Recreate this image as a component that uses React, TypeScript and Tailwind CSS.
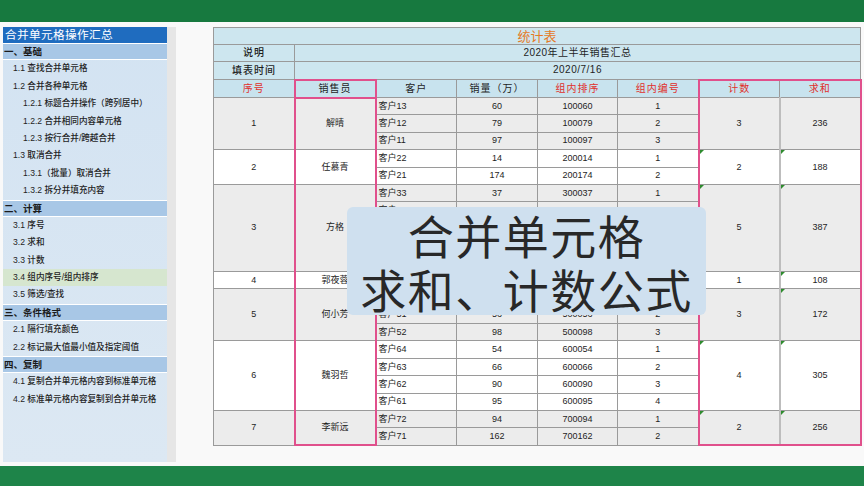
type Row = [string, number, string, number];
type Group = { no: number; name: string; rows: Row[]; count: number; sum: number };

const groups: Group[] = [
  { no: 1, name: "解晴", count: 3, sum: 236, rows: [["客户13", 60, "100060", 1], ["客户12", 79, "100079", 2], ["客户11", 97, "100097", 3]] },
  { no: 2, name: "任慕青", count: 2, sum: 188, rows: [["客户22", 14, "200014", 1], ["客户21", 174, "200174", 2]] },
  {
    no: 3, name: "方格", count: 5, sum: 387,
    rows: [["客户33", 37, "300037", 1], ["客户32", 73, "300073", 2], ["客户35", 82, "300082", 3], ["客户31", 95, "300095", 4], ["客户34", 100, "300100", 5]],
  },
  { no: 4, name: "郭夜蓉", count: 1, sum: 108, rows: [["客户41", 108, "400108", 1]] },
  { no: 5, name: "何小芳", count: 3, sum: 172, rows: [["客户53", 18, "500018", 1], ["客户51", 56, "500056", 2], ["客户52", 98, "500098", 3]] },
  { no: 6, name: "魏羽哲", count: 4, sum: 305, rows: [["客户64", 54, "600054", 1], ["客户63", 66, "600066", 2], ["客户62", 90, "600090", 3], ["客户61", 95, "600095", 4]] },
  { no: 7, name: "李新远", count: 2, sum: 256, rows: [["客户72", 94, "700094", 1], ["客户71", 162, "700162", 2]] },
];

type NavItem = { text: string; kind: "head" | "l1" | "l2" | "hl" };

const nav: NavItem[] = [
  { text: "一、基础", kind: "head" },
  { text: "1.1 查找合并单元格", kind: "l1" },
  { text: "1.2 合并各种单元格", kind: "l1" },
  { text: "1.2.1 标题合并操作（跨列居中）", kind: "l2" },
  { text: "1.2.2 合并相同内容单元格", kind: "l2" },
  { text: "1.2.3 按行合并/跨越合并", kind: "l2" },
  { text: "1.3 取消合并", kind: "l1" },
  { text: "1.3.1（批量）取消合并", kind: "l2" },
  { text: "1.3.2 拆分并填充内容", kind: "l2" },
  { text: "二、计算", kind: "head" },
  { text: "3.1 序号", kind: "l1" },
  { text: "3.2 求和", kind: "l1" },
  { text: "3.3 计数", kind: "l1" },
  { text: "3.4 组内序号/组内排序", kind: "hl" },
  { text: "3.5 筛选/查找", kind: "l1" },
  { text: "三、条件格式", kind: "head" },
  { text: "2.1 隔行填充颜色", kind: "l1" },
  { text: "2.2 标记最大值最小值及指定阈值", kind: "l1" },
  { text: "四、复制", kind: "head" },
  { text: "4.1 复制合并单元格内容到标准单元格", kind: "l1" },
  { text: "4.2 标准单元格内容复制到合并单元格", kind: "l1" },
];

const Sidebar = () => {
  return (
    <div className="w-[164px] h-[435px] flex flex-col bg-gradient-to-b from-[#d3e3f2] to-[#dce8f3]">
      <div className="h-[16px] bg-[#1f6cbf] text-white text-[11.7px] leading-[16px] pl-[2px] tracking-[0.3px] whitespace-nowrap">
        合并单元格操作汇总
      </div>
      {nav.map((item) => {
        if (item.kind === "head") {
          return (
            <div
              key={item.text}
              className="h-[17.4px] bg-[#a8c7e6] border-y border-white text-[9.5px] font-bold leading-[15px] pl-[1px] text-[#1a1a1a]"
            >
              {item.text}
            </div>
          );
        }
        return (
          <div
            key={item.text}
            className={`h-[17.4px] text-[8.6px] leading-[17.4px] whitespace-nowrap text-[#1f1f1f] font-medium ${
              item.kind === "l2" ? "pl-[20px]" : "pl-[10px]"
            } ${item.kind === "hl" ? "bg-[#d6e6cf]" : ""}`}
          >
            {item.text}
          </div>
        );
      })}
    </div>
  );
};

const Tri = () => (
  <span className="absolute top-0 left-0 w-0 h-0 border-t-[4px] border-t-[#2e8b2e] border-r-[4px] border-r-transparent" />
);

const SalesTable = () => {
  return (
    <table className="w-[647px] table-fixed border-collapse border border-[#9a9a9a] text-[9px] text-[#1e1e1e] leading-none">
      <colgroup>
        <col className="w-[81px]" />
        <col className="w-[81px]" />
        <col className="w-[81px]" />
        <col className="w-[81px]" />
        <col className="w-[80px]" />
        <col className="w-[81px]" />
        <col className="w-[81px]" />
        <col className="w-[81px]" />
      </colgroup>
      <tbody>
        <tr className="h-[17px] bg-[#cde6ef]">
          <td colSpan={8} className="border border-[#9a9a9a] text-center text-[13px] text-[#e57a26] p-0">
            统计表
          </td>
        </tr>
        <tr className="h-[17px] bg-[#cde6ef]">
          <td className="border border-[#9a9a9a] text-center text-[10px] font-medium tracking-[1px] p-0">说明</td>
          <td colSpan={7} className="border border-[#9a9a9a] text-center text-[10px] tracking-[0.5px] p-0">
            2020年上半年销售汇总
          </td>
        </tr>
        <tr className="h-[18px] bg-[#cde6ef]">
          <td className="border border-[#9a9a9a] text-center text-[10px] font-medium tracking-[1px] p-0">填表时间</td>
          <td colSpan={7} className="border border-[#9a9a9a] text-center text-[10px] tracking-[0.5px] p-0">
            2020/7/16
          </td>
        </tr>
        <tr className="h-[18px] bg-[#c8e3ee] text-[10px] tracking-[1px]">
          <td className="border border-[#9a9a9a] text-center text-[#e0302c] p-0">序号</td>
          <td className="border-2 border-[#e0508c] text-center p-0">销售员</td>
          <td className="border border-[#9a9a9a] text-center p-0">客户</td>
          <td className="border border-[#9a9a9a] text-center p-0">销量（万）</td>
          <td className="border border-[#9a9a9a] text-center text-[#e0302c] p-0">组内排序</td>
          <td className="border border-[#9a9a9a] text-center text-[#e0302c] p-0">组内编号</td>
          <td className="border border-[#9a9a9a] border-l-2 border-t-2 border-l-[#e0508c] border-t-[#e0508c] text-center text-[#e0302c] p-0">
            计数
          </td>
          <td className="border border-[#9a9a9a] border-r-2 border-t-2 border-r-[#e0508c] border-t-[#e0508c] text-center text-[#e0302c] p-0">
            求和
          </td>
        </tr>
        {groups.map((g, gi) => {
          const bg = g.no % 2 === 1 ? "bg-[#ececec]" : "bg-white";
          const last = gi === groups.length - 1;
          return g.rows.map((r, ri) => (
            <tr key={r[0]} className={`h-[17.4px] ${bg}`}>
              {ri === 0 && (
                <>
                  <td rowSpan={g.rows.length} className="border border-[#9a9a9a] text-center p-0">
                    {g.no}
                  </td>
                  <td
                    rowSpan={g.rows.length}
                    className={`border border-[#9a9a9a] border-x-2 border-x-[#e0508c] text-center p-0 ${
                      last ? "border-b-2 border-b-[#e0508c]" : ""
                    }`}
                  >
                    {g.name}
                  </td>
                </>
              )}
              <td className="border border-[#9a9a9a] text-left pl-[2px] p-0">{r[0]}</td>
              <td className="border border-[#9a9a9a] text-center p-0">{r[1]}</td>
              <td className="border border-[#9a9a9a] text-center p-0">{r[2]}</td>
              <td className="border border-[#9a9a9a] text-center p-0">{r[3]}</td>
              {ri === 0 && (
                <>
                  <td
                    rowSpan={g.rows.length}
                    className={`relative border border-[#9a9a9a] border-l-2 border-l-[#e0508c] border-r-2 border-r-[#bdbdbd] text-center p-0 ${
                      last ? "border-b-2 border-b-[#e0508c]" : ""
                    }`}
                  >
                    {gi > 0 && <Tri />}
                    {g.count}
                  </td>
                  <td
                    rowSpan={g.rows.length}
                    className={`relative border border-[#9a9a9a] border-r-2 border-r-[#e0508c] text-center p-0 ${
                      last ? "border-b-2 border-b-[#e0508c]" : ""
                    }`}
                  >
                    {gi > 0 && <Tri />}
                    {g.sum}
                  </td>
                </>
              )}
            </tr>
          ));
        })}
      </tbody>
    </table>
  );
};

export default function App() {
  return (
    <div className="relative w-[864px] h-[486px] flex flex-col overflow-hidden bg-[#f9f9f9] font-['Liberation_Sans','Noto_Sans_CJK_SC',sans-serif]">
      <div className="h-[22px] bg-[#17793f]" />
      <div className="flex-1 flex pt-[5px] pl-[3px]">
        <Sidebar />
        <div className="w-[9px] h-[435px] bg-[#e6e6e6]" />
        <div className="ml-[37px]">
          <SalesTable />
        </div>
      </div>
      <div className="h-[20px] bg-[#1e8449]" />
      <div className="absolute left-[347px] top-[207px] w-[359px] h-[108px] rounded-md bg-[#cfe0ef] flex flex-col items-center justify-center text-[46px] leading-[54px] tracking-[1.5px] text-[#282828] font-['Noto_Sans_CJK_SC',sans-serif]">
        <div>合并单元格</div>
        <div>求和、计数公式</div>
      </div>
    </div>
  );
}
